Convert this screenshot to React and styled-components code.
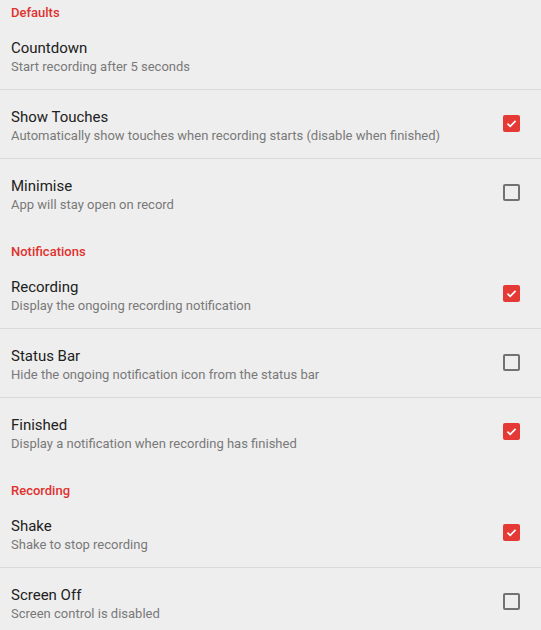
import React from 'react';
import styled, { createGlobalStyle } from 'styled-components';

const GlobalStyle = createGlobalStyle`
  html, body {
    margin: 0;
    padding: 0;
    background: #eeeeee;
  }
  body {
    font-family: Roboto, "Noto Sans", "Liberation Sans", sans-serif;
  }
`;

const Page = styled.div`
  width: 541px;
  height: 630px;
  overflow: hidden;
  background: #eeeeee;
`;

const SectionHeader = styled.div`
  padding: ${(p) => (p.first ? '5px' : '17px')} 11px 0;
  font-size: 13px;
  line-height: 16px;
  font-weight: 500;
  color: #e0312f;
`;

const Row = styled.div`
  display: flex;
  align-items: center;
  padding: 17px 21px 13px 11px;
  border-bottom: ${(p) => (p.last ? 'none' : '1px solid #dadada')};
`;

const Texts = styled.div`
  flex: 1;
  min-width: 0;
`;

const Title = styled.div`
  font-size: 15px;
  line-height: 20px;
  color: #212121;
`;

const Summary = styled.div`
  font-size: 13px;
  line-height: 18px;
  color: #797979;
`;

const Box = styled.div`
  width: 17px;
  height: 17px;
  margin-top: -5px;
  box-sizing: border-box;
  border-radius: 2px;
  flex-shrink: 0;
  display: flex;
  align-items: center;
  justify-content: center;
  background: ${(p) => (p.checked ? '#e53935' : 'transparent')};
  border: ${(p) => (p.checked ? 'none' : '2px solid #727272')};
`;

const Checkbox = ({ checked }) => (
  <Box checked={checked}>
    {checked && (
      <svg width="13" height="13" viewBox="0 0 14 14">
        <path d="M2.6 7.2 L5.6 10 L11.4 4.2" fill="none" stroke="#fff" strokeWidth="1.9" />
      </svg>
    )}
  </Box>
);

const sections = [
  {
    name: 'Defaults',
    items: [
      { title: 'Countdown', summary: 'Start recording after 5 seconds' },
      { title: 'Show Touches', summary: 'Automatically show touches when recording starts (disable when finished)', checked: true },
      { title: 'Minimise', summary: 'App will stay open on record', checked: false },
    ],
  },
  {
    name: 'Notifications',
    items: [
      { title: 'Recording', summary: 'Display the ongoing recording notification', checked: true },
      { title: 'Status Bar', summary: 'Hide the ongoing notification icon from the status bar', checked: false },
      { title: 'Finished', summary: 'Display a notification when recording has finished', checked: true },
    ],
  },
  {
    name: 'Recording',
    items: [
      { title: 'Shake', summary: 'Shake to stop recording', checked: true },
      { title: 'Screen Off', summary: 'Screen control is disabled', checked: false },
    ],
  },
];

export default function App() {
  return (
    <Page>
      <GlobalStyle />
      {sections.map((section, si) => (
        <div key={section.name}>
          <SectionHeader first={si === 0}>{section.name}</SectionHeader>
          {section.items.map((item, i) => (
            <Row key={item.title} last={i === section.items.length - 1}>
              <Texts>
                <Title>{item.title}</Title>
                <Summary>{item.summary}</Summary>
              </Texts>
              {item.checked !== undefined && <Checkbox checked={item.checked} />}
            </Row>
          ))}
        </div>
      ))}
    </Page>
  );
}
